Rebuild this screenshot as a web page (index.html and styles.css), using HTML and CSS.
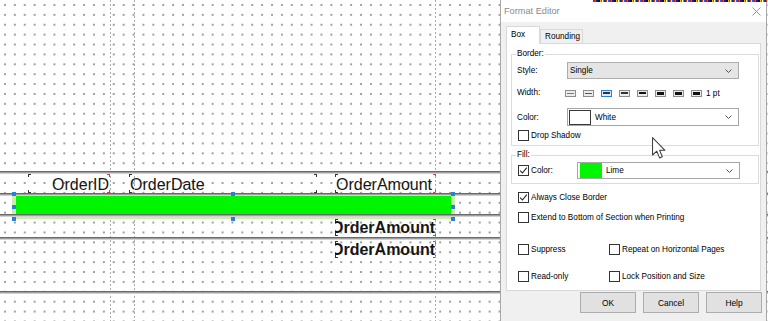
FILE: index.html
```html
<!DOCTYPE html>
<html>
<head>
<meta charset="utf-8">
<title>Format Editor</title>
<link rel="stylesheet" href="styles.css">
</head>
<body>
<div class="canvas">
  <div class="band band-top"></div>
  <div class="sep"></div>
  <div class="band band-head">
    <div class="field f-id red"><span>OrderID</span></div>
    <div class="field f-date"><span>OrderDate</span></div>
    <div class="field f-amt red"><span>OrderAmount</span></div>
  </div>
  <div class="sep"></div>
  <div class="band band-box"></div>
  <div class="sep"></div>
  <div class="band band-row1">
    <div class="field f-bold red"><span>OrderAmount</span></div>
  </div>
  <div class="sep"></div>
  <div class="band band-row2">
    <div class="field f-bold f-bold2 red"><span>OrderAmount</span></div>
  </div>
  <div class="sep"></div>
  <div class="band band-bottom"></div>

  <div class="guide g1"></div>
  <div class="guide g2"></div>
  <div class="guide g3"></div>

  <div class="halo"></div>
  <div class="greenbox"></div>
  <div class="handle h1"></div>
  <div class="handle h2"></div>
  <div class="handle h3"></div>
  <div class="handle h4"></div>
  <div class="handle h5"></div>
  <div class="handle h6"></div>
  <div class="handle h7"></div>
  <div class="handle h8"></div>
</div>

<div class="dialog">
  <div class="noise"></div>
  <div class="titlebar">
    <span class="title">Format Editor</span>
    <svg class="close" width="9" height="9" viewBox="0 0 9 9"><path d="M0.5 0.5L8.5 8.5M8.5 0.5L0.5 8.5" stroke="#9a9a9a" stroke-width="1" fill="none"/></svg>
  </div>
  <div class="body">
    <div class="tabs">
      <div class="tab active">Box</div>
      <div class="tab inactive">Rounding</div>
    </div>
    <div class="panel">
      <div class="group g-border">
        <div class="legend">Border:</div>
        <div class="row row-style">
          <span class="lbl">Style:</span>
          <div class="combo gray"><span class="ctext">Single</span><svg class="chev" width="7" height="4" viewBox="0 0 7 4"><path d="M0.5 0.5L3.5 3.5L6.5 0.5" stroke="#555" fill="none"/></svg></div>
        </div>
        <div class="row row-width">
          <span class="lbl">Width:</span>
          <div class="widths">
            <span class="wb"><i class="t1 light"></i></span>
            <span class="wb"><i class="t1"></i></span>
            <span class="wb sel"><i class="t2"></i></span>
            <span class="wb"><i class="t2"></i></span>
            <span class="wb"><i class="t2 dark"></i></span>
            <span class="wb"><i class="t3"></i></span>
            <span class="wb"><i class="t3"></i></span>
            <span class="wb"><i class="t3"></i></span>
            <span class="pt">1 pt</span>
          </div>
        </div>
        <div class="row row-color">
          <span class="lbl">Color:</span>
          <div class="combo"><span class="swatch white"></span><span class="ctext">White</span><svg class="chev" width="7" height="4" viewBox="0 0 7 4"><path d="M0.5 0.5L3.5 3.5L6.5 0.5" stroke="#555" fill="none"/></svg></div>
        </div>
        <div class="check row-shadow"><span class="cb"></span><span>Drop Shadow</span></div>
      </div>

      <div class="group g-fill">
        <div class="legend">Fill:</div>
        <div class="row row-fill">
          <div class="check"><span class="cb"><svg width="9" height="9" viewBox="0 0 9 9"><path d="M1.2 4.6L3.4 7L7.8 1.6" stroke="#222" stroke-width="1.1" fill="none"/></svg></span><span>Color:</span></div>
          <div class="combo"><span class="swatch lime"></span><span class="ctext">Lime</span><svg class="chev" width="7" height="4" viewBox="0 0 7 4"><path d="M0.5 0.5L3.5 3.5L6.5 0.5" stroke="#555" fill="none"/></svg></div>
        </div>
      </div>

      <div class="checks">
        <div class="check c-always"><span class="cb"><svg width="9" height="9" viewBox="0 0 9 9"><path d="M1.2 4.6L3.4 7L7.8 1.6" stroke="#222" stroke-width="1.1" fill="none"/></svg></span><span>Always Close Border</span></div>
        <div class="check c-extend"><span class="cb"></span><span>Extend to Bottom of Section when Printing</span></div>
        <div class="pair c-suppress">
          <div class="check"><span class="cb"></span><span>Suppress</span></div>
          <div class="check"><span class="cb"></span><span>Repeat on Horizontal Pages</span></div>
        </div>
        <div class="pair c-readonly">
          <div class="check"><span class="cb"></span><span>Read-only</span></div>
          <div class="check"><span class="cb"></span><span>Lock Position and Size</span></div>
        </div>
      </div>
    </div>
    <div class="buttons">
      <div class="btn">OK</div>
      <div class="btn">Cancel</div>
      <div class="btn">Help</div>
    </div>
  </div>
</div>

<svg class="cursor" width="14" height="22" viewBox="0 0 12.5 19.5"><path d="M0.5 0.5L0.5 16L4.3 12.6L6.8 18.6L9.2 17.6L6.8 11.8L11.6 11.8Z" fill="#fff" stroke="#3a3a3a" stroke-width="0.9" stroke-linejoin="round"/></svg>
</body>
</html>
```

FILE: styles.css
```css
* { box-sizing: border-box; }
html, body { margin: 0; padding: 0; }
body {
  width: 768px;
  height: 321px;
  overflow: hidden;
  position: relative;
  background: #fff;
  font-family: "Liberation Sans", Arial, sans-serif;
}

/* ---------- report design canvas ---------- */
.canvas {
  position: relative;
  width: 768px;
  height: 321px;
  display: flex;
  flex-direction: column;
  background-color: #fff;
  background-image: radial-gradient(circle at 5px 5px, #9c9c9c 0 0.7px, rgba(255,255,255,0) 1.2px);
  background-size: 9.9px 9.9px;
}
.band { position: relative; flex: none; }
.band-top { height: 171px; }
.band-head { height: 19px; }
.band-box { height: 18px; }
.band-row1 { height: 20px; }
.band-row2 { height: 51px; }
.band-bottom { flex: 1; }

.sep {
  flex: none;
  height: 3px;
  position: relative;
  z-index: 2;
  background: linear-gradient(#6a6a6a 0 1px, #9e9e9e 1px 2px, #d2d2d2 2px 3px);
}

.field {
  --tl: #333;
  --tr: #333;
  position: absolute;
  top: 0;
  height: 19px;
  display: flex;
  white-space: nowrap;
  overflow: hidden;
  font-size: 16px;
  line-height: 21px;
  color: #151515;
  background:
    linear-gradient(var(--tl), var(--tl)) left top / 1px 3px no-repeat,
    linear-gradient(var(--tl), var(--tl)) left top / 3px 1px no-repeat,
    linear-gradient(var(--tl), var(--tl)) left bottom / 1px 3px no-repeat,
    linear-gradient(var(--tl), var(--tl)) left bottom / 3px 1px no-repeat,
    linear-gradient(var(--tr), var(--tr)) right top / 1px 3px no-repeat,
    linear-gradient(var(--tr), var(--tr)) right top / 3px 1px no-repeat,
    linear-gradient(var(--tr), var(--tr)) right bottom / 1px 3px no-repeat,
    linear-gradient(var(--tr), var(--tr)) right bottom / 3px 1px no-repeat;
}
.field.red { --tr: #e23a3a; }
.f-id { left: 28px; width: 82px; justify-content: flex-end; padding-right: 1px; }
.f-date { left: 129px; width: 188px; padding-left: 1px; }
.f-amt { left: 335px; width: 101px; padding-left: 1px; }
.f-bold {
  left: 335px;
  width: 101px;
  top: 2px;
  height: 17px;
  line-height: 17px;
  font-weight: bold;
  justify-content: flex-end;
  padding-right: 1px;
}
.f-bold2 { top: 1px; }

.guide {
  position: absolute;
  top: 0;
  width: 1px;
  height: 321px;
  z-index: 1;
  background: repeating-linear-gradient(to bottom, #a9a9a9 0 2px, rgba(255,255,255,0) 2px 4px);
}
.g1 { left: 110px; }
.g2 { left: 134px; }
.g3 { left: 435px; }

.halo {
  position: absolute;
  left: 12px;
  top: 193px;
  width: 443px;
  height: 26px;
  background: #cbeeaa;
  z-index: 1;
}
.greenbox {
  position: absolute;
  left: 16px;
  top: 196px;
  width: 435px;
  height: 18px;
  background: #00f500;
  z-index: 3;
}
.handle {
  position: absolute;
  width: 4px;
  height: 4px;
  background: #2a7fd6;
  z-index: 4;
}
.h1 { left: 12px; top: 192px; }
.h2 { left: 12px; top: 205px; }
.h3 { left: 12px; top: 217px; }
.h4 { left: 231px; top: 192px; }
.h5 { left: 231px; top: 217px; }
.h6 { left: 451px; top: 192px; }
.h7 { left: 451px; top: 205px; }
.h8 { left: 451px; top: 217px; }

/* ---------- dialog ---------- */
.dialog {
  position: absolute;
  left: 500px;
  top: 0;
  width: 267px;
  height: 321px;
  z-index: 10;
  display: flex;
  flex-direction: column;
  background: #f0f0f0;
  border-left: 1px solid #a8a8a8;
  border-right: 1px solid #a8a8a8;
  font-size: 8.2px;
  color: #000;
}
.noise {
  position: absolute;
  left: 92px;
  top: 0;
  width: 175px;
  height: 2px;
  background: repeating-linear-gradient(to right,
    #d01818 0 2px, #22aa22 2px 3px, #1a1aa0 3px 5px, #111 5px 7px,
    #f0c000 7px 8px, #d020d0 8px 9px, #fff 9px 10px, #10b0c0 10px 11px,
    #333 11px 13px, #c04040 13px 14px, #e0e0e0 14px 15px, #2060f0 15px 16px);
  z-index: 2;
}
.titlebar {
  flex: none;
  height: 22px;
  background: #fff;
  display: flex;
  align-items: center;
  justify-content: space-between;
  padding: 0 5px 0 3px;
}
.title { font-size: 9.2px; color: #8a8a8a; }
.close { display: block; }

.body {
  flex: 1;
  display: flex;
  flex-direction: column;
  padding: 4px 4px 0 5px;
}
.tabs {
  display: flex;
  align-items: flex-end;
  height: 18px;
  margin-bottom: -1px;
  position: relative;
  z-index: 1;
}
.tab {
  border: 1px solid #d9d9d9;
  border-bottom: none;
  padding-left: 4px;
}
.tab.active { width: 34px; height: 18px; line-height: 16px; background: #fff; }
.tab.inactive { width: 43px; height: 14px; line-height: 13px; background: #f0f0f0; margin-bottom: 1px; }

.panel {
  flex: none;
  width: 255px;
  height: 248px;
  background: #fff;
  border: 1px solid #d9d9d9;
  padding: 0 1px 0 4px;
}
.group {
  border: 1px solid #dcdcdc;
  margin-top: 10px;
  padding: 0 0 4px 5px;
}
.g-fill { margin-top: 9px; }
.legend {
  width: fit-content;
  margin: -6px 0 0 -1px;
  padding: 0 1px;
  line-height: 10px;
  background: #fff;
}
.row {
  display: grid;
  align-items: center;
}
.row-style { grid-template-columns: 50px 172px; height: 17px; margin-top: 3px; }
.row-width { grid-template-columns: 48px auto; height: 16px; margin-top: 5px; }
.row-color { grid-template-columns: 50px 172px; height: 18px; margin-top: 8px; }
.row-shadow { margin-top: 3px; margin-left: 1px; height: 12px; }
.row-fill { grid-template-columns: 60px 163px; height: 17px; margin-top: 2px; }
.row-fill .check { margin-left: 1px; }

.combo {
  height: 100%;
  display: flex;
  align-items: center;
  border: 1px solid #a6a6a6;
  background: #fff;
  padding: 0 6px 0 2px;
}
.combo.gray { background: #e5e5e5; border-color: #adadad; }
.ctext { flex: 1; }
.chev { display: block; flex: none; }
.swatch { flex: none; width: 22px; height: 15px; margin-right: 4px; }
.swatch.white { background: #fff; border: 1px solid #3a3a3a; margin-left: -1px; }
.swatch.lime { background: #00f500; }

.widths { display: flex; align-items: center; gap: 7px; padding-top: 2px; }
.wb {
  width: 11px;
  height: 7px;
  border: 1px solid #8c8c8c;
  background: #ececec;
  display: flex;
  align-items: center;
  padding: 0 1px;
}
.wb i { display: block; width: 100%; background: #333; }
.wb i.t1 { height: 1px; background: #555; }
.wb i.light { background: #777; }
.wb i.t2 { height: 2px; }
.wb i.dark { background: #111; }
.wb i.t3 { height: 3px; background: #111; }
.wb.sel { border-color: #2f7bd6; background: #dbe9f8; }
.pt { margin-left: -3px; }

.check { display: flex; align-items: center; gap: 2px; white-space: nowrap; }
.cb {
  flex: none;
  width: 11px;
  height: 11px;
  border: 1px solid #333;
  background: #fff;
  display: flex;
  align-items: center;
  justify-content: center;
}
.cb svg { display: block; }

.checks { display: flex; flex-direction: column; margin-left: 7px; }
.checks .check, .checks .pair { height: 11px; }
.c-always { margin-top: 8px; }
.c-extend { margin-top: 9px; }
.c-suppress { margin-top: 21px; }
.c-readonly { margin-top: 16px; }
.pair { display: grid; grid-template-columns: 91px auto; }

.buttons {
  display: flex;
  justify-content: flex-end;
  gap: 7px;
  margin-top: 1px;
}
.btn {
  width: 56px;
  height: 21px;
  border: 1px solid #adadad;
  background: #e1e1e1;
  display: flex;
  align-items: center;
  justify-content: center;
  font-size: 8.4px;
}

.cursor {
  position: absolute;
  left: 652px;
  top: 137px;
  z-index: 20;
}
```
